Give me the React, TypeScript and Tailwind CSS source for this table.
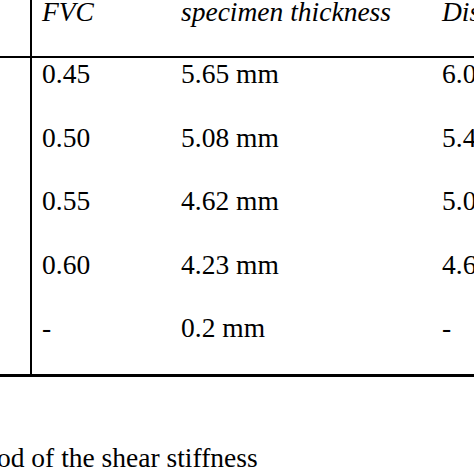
import React from 'react'

const rows = [
  ['0.45', '5.65 mm', '6.05 mm'],
  ['0.50', '5.08 mm', '5.45 mm'],
  ['0.55', '4.62 mm', '5.00 mm'],
  ['0.60', '4.23 mm', '4.62 mm'],
  ['-', '0.2 mm', '-'],
]

const cols = 'grid grid-cols-[32px_149px_260px_240px]'

export default function App() {
  return (
    <div className="w-[474px] h-[474px] overflow-hidden bg-white text-black font-['Liberation_Serif',serif] text-[27.5px]">
      <div className="w-[700px]">
        {/* header */}
        <div className={`${cols} h-[58px] border-b-2 border-black`}>
          <div className="border-r-2 border-black" />
          <div className="pl-[10px] italic leading-[24px]">FVC</div>
          <div className="italic leading-[24px]">specimen thickness</div>
          <div className="italic leading-[24px] pl-px">Displacement</div>
        </div>

        {rows.map((r, i) => (
          <div
            key={i}
            className={`${cols} ${i === rows.length - 1 ? 'h-[65px] border-b-[3px] border-black' : 'h-[63.5px]'}`}
          >
            <div className="border-r-2 border-black" />
            <div className="pl-[10px] leading-[32px]">{r[0]}</div>
            <div className="leading-[32px]">{r[1]}</div>
            <div className="leading-[32px] pl-px">{r[2]}</div>
          </div>
        ))}

        <p className="mt-[65px] ml-[-58px] leading-[31px] whitespace-nowrap">
          method of the shear stiffness
        </p>
      </div>
    </div>
  )
}
